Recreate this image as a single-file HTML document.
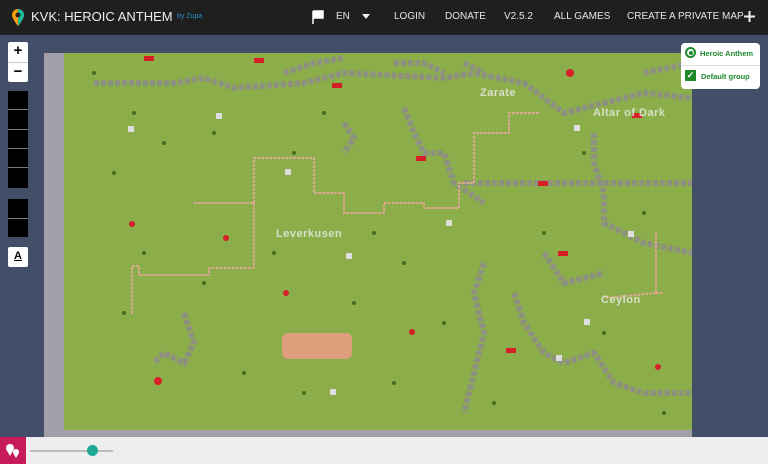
<!DOCTYPE html>
<html><head><meta charset="utf-8"><style>
*{margin:0;padding:0;box-sizing:border-box}
html,body{width:768px;height:464px;overflow:hidden}
body{background:#434e68;font-family:"Liberation Sans",sans-serif;position:relative}
.hdr{position:absolute;left:0;top:0;width:768px;height:35px;background:#1f1f1f;color:#e6e6e6}
.hdr span{position:absolute;top:11px;font-size:10px;white-space:nowrap}
.title{left:31px;top:9px!important;font-size:13px!important;color:#eee}
.map{position:absolute;left:44px;top:53px;width:648px;height:384px;background:#8cae4a;overflow:hidden}
.rockl{position:absolute;left:0;top:0;width:20px;height:384px;background:#a29eaa}
.rockb{position:absolute;left:0;top:377px;width:648px;height:7px;background:#a29eaa}
.ctl{position:absolute;left:8px;width:20px;background:#fff;border-radius:2px}
.blk{position:absolute;left:8px;width:20px;background:#000}
.bot{position:absolute;left:0;top:437px;width:768px;height:27px;background:#eeeeee}
.lbl{position:absolute;color:#d8e0c8;font-weight:bold;font-size:11px;letter-spacing:.5px}
</style></head><body>
<div class="hdr">
<svg style="position:absolute;left:11px;top:8px" width="14" height="19" viewBox="0 0 14 19"><path d="M7 1a6 6 0 0 0-6 6c0 4 6 11 6 11s6-7 6-11a6 6 0 0 0-6-6z" fill="#f39c12"/><path d="M7 1a6 6 0 0 1 6 6c0 4-6 11-6 11z" fill="#1abc9c"/><circle cx="7" cy="7" r="2.5" fill="#1f1f1f"/></svg>
<span class="title">KVK: HEROIC ANTHEM</span>
<span style="left:177px;top:13px;font-size:7px;color:#2b8ec0">by Zupa</span>
<svg style="position:absolute;left:312px;top:10px" width="12" height="14"><path d="M1 1v13M1 1h10v7H1" stroke="#fff" stroke-width="1.5" fill="#fff"/></svg>
<span style="left:336px">EN</span>
<svg style="position:absolute;left:362px;top:14px" width="8" height="5"><path d="M0 0h8L4 5z" fill="#eee"/></svg>
<span style="left:394px">LOGIN</span>
<span style="left:445px">DONATE</span>
<span style="left:504px">V2.5.2</span>
<span style="left:554px">ALL GAMES</span>
<span style="left:627px">CREATE A PRIVATE MAP</span>
<svg style="position:absolute;left:744px;top:11px" width="11" height="11"><path d="M5.5 0v11M0 5.5h11" stroke="#eee" stroke-width="2"/></svg>
</div>
<div class="map">
<div class="rockl"></div><div class="rockb"></div>
<svg width="648" height="384" style="position:absolute;left:0;top:0">
<g fill="none" stroke="#8f8c8a" stroke-width="6" stroke-dasharray="5 2" opacity=".85">
<path d="M50 30 L130 30 L160 25 L190 35 L260 30 L300 20 L400 25 L430 20 L480 30 L520 60 L560 50 L600 40 L648 45"/>
<path d="M240 20 L270 10 L300 5 M350 10 L380 10 L400 20 M420 10 L440 20 M600 20 L648 10"/>
<path d="M360 55 L370 80 L380 100 L400 100 L410 130 L440 150"/>
<path d="M300 70 L310 85 L300 100"/>
<path d="M420 130 L470 130 L520 130 L560 130 L600 130 L648 130"/>
<path d="M550 80 L550 110 L560 140 L560 170 L600 190 L648 200"/>
<path d="M140 260 L150 290 L140 310 L120 300 L110 310"/>
<path d="M440 210 L430 240 L440 280 L430 320 L420 360"/>
<path d="M470 240 L480 270 L500 300 L520 310 L550 300 L570 330 L600 340 L648 340"/>
<path d="M500 200 L520 230 L560 220"/>
</g>
<g fill="none" stroke="#d9a98d" stroke-width="2" stroke-dasharray="3 1">
<path d="M150 150 L210 150 L210 105 L270 105 L270 140 L300 140 L300 160 L340 160 L340 150 L380 150 L380 155 L415 155 L415 130 L430 130 L430 80 L465 80 L465 60 L495 60"/>
<path d="M210 150 L210 215 L165 215 L165 222 L95 222 L95 213 L88 213 L88 262"/>
<path d="M612 180 L612 240 L620 240 M612 240 L560 245"/>
</g>
<rect x="238" y="280" width="70" height="26" rx="6" fill="#df9e7c"/>
<g fill="#476b1f">
<circle cx="50" cy="20" r="2"/><circle cx="90" cy="60" r="2"/><circle cx="120" cy="90" r="2"/><circle cx="70" cy="120" r="2"/><circle cx="100" cy="200" r="2"/><circle cx="160" cy="230" r="2"/><circle cx="80" cy="260" r="2"/><circle cx="200" cy="320" r="2"/><circle cx="260" cy="340" r="2"/><circle cx="310" cy="250" r="2"/><circle cx="360" cy="210" r="2"/><circle cx="400" cy="270" r="2"/><circle cx="500" cy="180" r="2"/><circle cx="560" cy="280" r="2"/><circle cx="620" cy="360" r="2"/><circle cx="450" cy="350" r="2"/><circle cx="350" cy="330" r="2"/><circle cx="170" cy="80" r="2"/><circle cx="250" cy="100" r="2"/><circle cx="540" cy="100" r="2"/><circle cx="600" cy="160" r="2"/><circle cx="330" cy="180" r="2"/><circle cx="230" cy="200" r="2"/><circle cx="280" cy="60" r="2"/>
</g>
<g fill="#d61f26">
<rect x="100" y="3" width="10" height="5"/><rect x="210" y="5" width="10" height="5"/><rect x="288" y="30" width="10" height="5"/><rect x="372" y="103" width="10" height="5"/><rect x="494" y="128" width="10" height="5"/><rect x="588" y="60" width="10" height="5"/><rect x="462" y="295" width="10" height="5"/><rect x="514" y="198" width="10" height="5"/>
<circle cx="114" cy="328" r="4"/><circle cx="88" cy="171" r="3"/><circle cx="242" cy="240" r="3"/><circle cx="368" cy="279" r="3"/><circle cx="526" cy="20" r="4"/><circle cx="614" cy="314" r="3"/><circle cx="182" cy="185" r="3"/>
</g>
<g fill="#ddd"><rect x="84" y="73" width="6" height="6"/><rect x="172" y="60" width="6" height="6"/><rect x="241" y="116" width="6" height="6"/><rect x="302" y="200" width="6" height="6"/><rect x="530" y="72" width="6" height="6"/><rect x="584" y="178" width="6" height="6"/><rect x="540" y="266" width="6" height="6"/><rect x="512" y="302" width="6" height="6"/><rect x="286" y="336" width="6" height="6"/><rect x="402" y="167" width="6" height="6"/></g>
</svg>
<div class="lbl" style="left:232px;top:175px">Leverkusen</div>
<div class="lbl" style="left:436px;top:34px">Zarate</div>
<div class="lbl" style="left:549px;top:54px">Altar of Dark</div>
<div class="lbl" style="left:557px;top:241px">Ceylon</div>
</div>
<div class="ctl" style="top:42px;height:40px"><div style="position:absolute;top:0;width:20px;text-align:center;font-size:15px;font-weight:bold">+</div><div style="position:absolute;top:20px;width:20px;border-top:1px solid #ccc;text-align:center;font-size:15px;font-weight:bold;line-height:17px">−</div></div>
<div class="blk" style="top:91px;height:97px;background:linear-gradient(#000 0 18px,#777 18px 19px,#000 19px 38px,#777 38px 39px,#000 39px 57px,#777 57px 58px,#000 58px 76px,#777 76px 77px,#000 77px)"></div>
<div class="blk" style="top:199px;height:38px;background:linear-gradient(#000 0 19px,#777 19px 20px,#000 20px)"></div>
<div class="ctl" style="top:247px;height:20px;text-align:center;font-size:11px;font-weight:bold;line-height:18px;text-decoration:underline">A</div>
<div style="position:absolute;left:681px;top:43px;width:79px;height:46px;background:#fff;border-radius:4px;font-size:7.5px;font-weight:bold;color:#1d8a2c;white-space:nowrap">
<div style="position:absolute;left:4px;top:4px;width:11px;height:11px;border:2px solid #1d8a2c;border-radius:50%"><div style="margin:1.5px;width:4px;height:4px;background:#1d8a2c;border-radius:50%"></div></div>
<span style="position:absolute;left:19px;top:6px">Heroic Anthem</span>
<div style="position:absolute;left:0;top:22px;width:79px;border-top:1px solid #ddd"></div>
<div style="position:absolute;left:4px;top:27px;width:11px;height:11px;background:#1d8a2c;color:#fff;font-size:9px;line-height:11px;text-align:center">✓</div>
<span style="position:absolute;left:20px;top:29px">Default group</span>
</div>
<div class="bot">
<div style="position:absolute;left:0;top:0;width:26px;height:27px;background:#c81b5a"><svg width="26" height="27"><circle cx="10" cy="11" r="4" fill="#fff"/><path d="M6 12l4 7 4-7z" fill="#fff"/><circle cx="16" cy="15" r="3" fill="#fff"/><path d="M13 16l3 5 3-5z" fill="#fff"/></svg></div>
<div style="position:absolute;left:30px;top:13px;width:83px;height:2px;background:#bbb"></div>
<div style="position:absolute;left:87px;top:8px;width:11px;height:11px;border-radius:50%;background:#1fa898"></div>
</div>
</body></html>
